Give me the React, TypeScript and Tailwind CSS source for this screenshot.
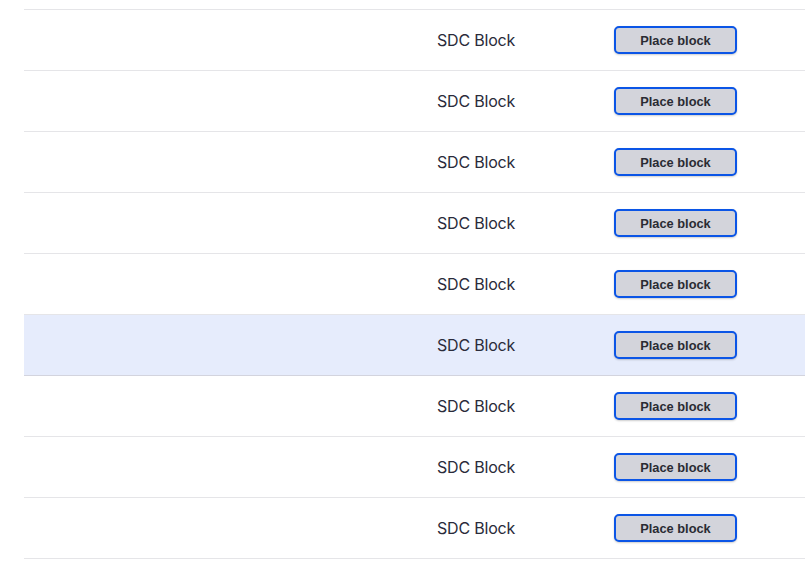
export default function App() {
  const rows = Array.from({ length: 9 }, (_, i) => i);
  return (
    <div className="w-[805px] h-[569px] overflow-hidden bg-white" style={{ fontFamily: "Inter, 'Noto Sans', sans-serif" }}>
      <div className="pt-[9px] pl-6">
        <div className="w-[800px] border-t border-[#e5e5e8]">
          {rows.map((i) => (
            <div
              key={i}
              className={
                "flex items-center h-[61px] border-b " +
                (i === 5 ? "bg-[#e6ecfc] border-[#d3d4de]" : "bg-white border-[#e5e5e8]")
              }
            >
              <div className="w-[397px]" />
              <div className="w-[177px] pl-4 text-[16px] tracking-[-0.2px] text-[#2a2b3a]">SDC Block</div>
              <div className="pl-4">
                <button className="w-[123px] h-[28px] pt-[2px] rounded-[5px] border-2 border-[#0b55e6] bg-[#d3d4db] font-['Liberation_Sans',Arial,sans-serif] text-[12.8px] font-bold text-[#2a2b33] shadow-[0_1px_2px_rgba(0,0,0,0.2)] flex items-center justify-center">
                  Place block
                </button>
              </div>
            </div>
          ))}
        </div>
      </div>
    </div>
  );
}
